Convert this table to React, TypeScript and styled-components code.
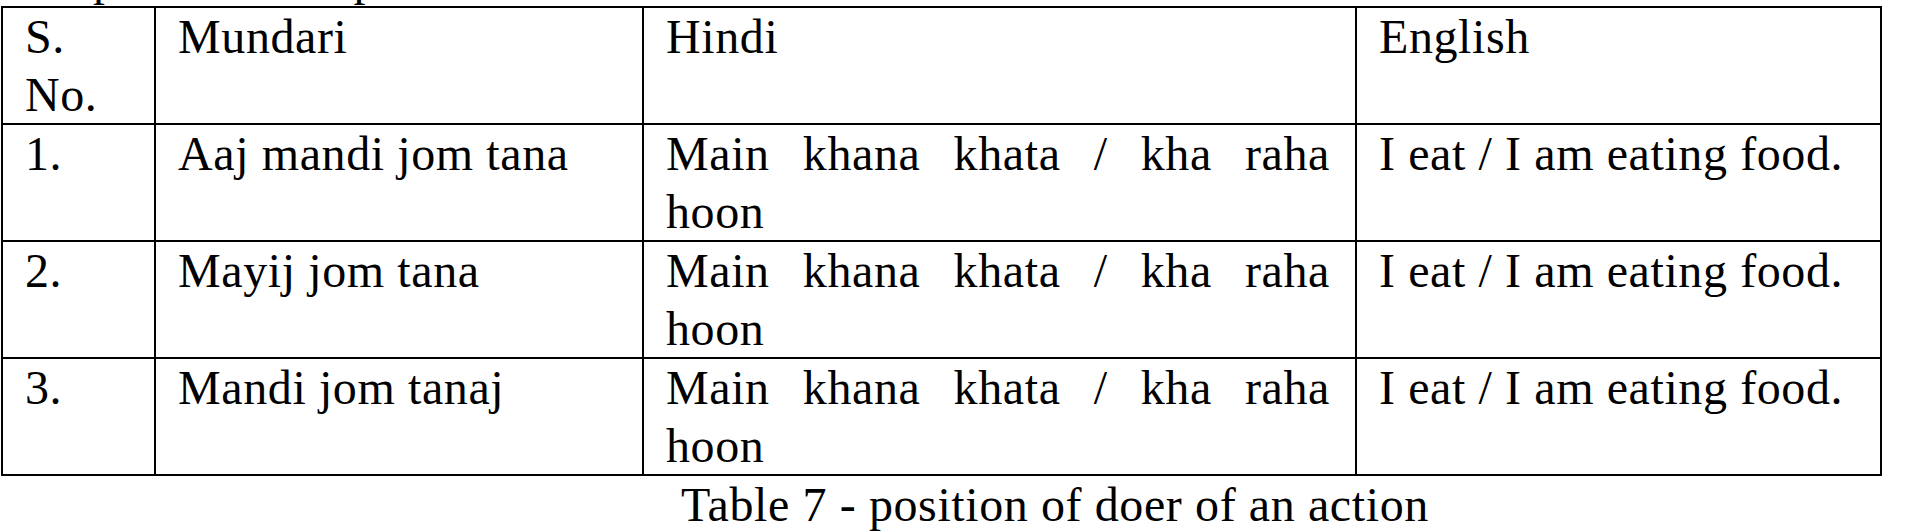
import styled, { createGlobalStyle } from "styled-components";

const GlobalStyle = createGlobalStyle`
    html, body {
        margin: 0;
        padding: 0;
        background: #ffffff;
    }
    body {
        color: #000000;
    }
`;

type Row = {
    no: string;
    mundari: string;
    hindi: string;
    english: string;
};

const rows: Row[] = [
    { no: "1.", mundari: "Aaj mandi jom tana", hindi: "Main khana khata / kha raha hoon", english: "I eat / I am eating food." },
    { no: "2.", mundari: "Mayij jom tana", hindi: "Main khana khata / kha raha hoon", english: "I eat / I am eating food." },
    { no: "3.", mundari: "Mandi jom tanaj", hindi: "Main khana khata / kha raha hoon", english: "I eat / I am eating food." },
];

const App: React.FC = () => {
    return (
        <>
            <GlobalStyle />
            <Page>
                {/* previous line of the document, cut off by the top of the page */}
                <CutLine>
                    <Text>The position of a pronoun</Text>
                </CutLine>
                <Table>
                    <Cell>S. No.</Cell>
                    <Cell>Mundari</Cell>
                    <Cell>Hindi</Cell>
                    <Cell>English</Cell>
                    {rows.map((r) => (
                        <Row key={r.no}>
                            <Cell>{r.no}</Cell>
                            <Cell>{r.mundari}</Cell>
                            <Cell $justify>{r.hindi}</Cell>
                            <Cell>{r.english}</Cell>
                        </Row>
                    ))}
                </Table>
                <Caption>Table 7 - position of doer of an action</Caption>
            </Page>
        </>
    );
};

// Styled Components

const Page = styled.div`
    width: 1915px;
    height: 532px;
    overflow: hidden;
    font-family: "Liberation Serif", "Times New Roman", serif;
    font-size: 48px;
    line-height: 57.5px;
    letter-spacing: 0.6px;
`;

const CutLine = styled.div`
    height: 6px;
    overflow: hidden;
    padding-left: 4px;
`;

const Text = styled.div`
    margin-top: -50px;
    white-space: nowrap;
`;

const Table = styled.div`
    display: grid;
    grid-template-columns: 153px 488px 713px 525px;
    width: fit-content;
    margin-left: 1px;
    border-top: 2px solid #000;
    border-left: 2px solid #000;
`;

const Row = styled.div`
    display: contents;
`;

const Cell = styled.div<{ $justify?: boolean }>`
    box-sizing: border-box;
    min-height: 117px;
    padding: 0 25px 0 22px;
    border-right: 2px solid #000;
    border-bottom: 2px solid #000;
    text-align: ${(p) => (p.$justify ? "justify" : "left")};
`;

const Caption = styled.div`
    padding-left: 681px;
    white-space: nowrap;
`;

export default App;
